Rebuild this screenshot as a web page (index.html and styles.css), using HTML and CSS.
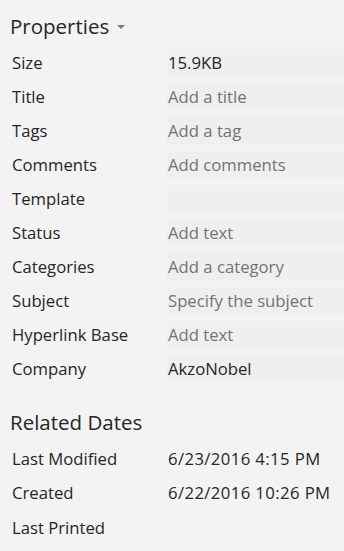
FILE: index.html
```html
<!DOCTYPE html>
<html lang="en">
<head>
    <meta charset="UTF-8">
    <title>Properties</title>
    <link rel="stylesheet" href="styles.css">
</head>
<body>

    <!-- Properties -->
    <div class="section">
        <h2 class="section-title">Properties <span class="caret"></span></h2>
        <div class="row"><span class="label">Size</span><span class="value filled">15.9KB</span></div>
        <div class="row"><span class="label">Title</span><span class="value">Add a title</span></div>
        <div class="row"><span class="label">Tags</span><span class="value">Add a tag</span></div>
        <div class="row"><span class="label">Comments</span><span class="value">Add comments</span></div>
        <div class="row"><span class="label">Template</span><span class="value"></span></div>
        <div class="row"><span class="label">Status</span><span class="value">Add text</span></div>
        <div class="row"><span class="label">Categories</span><span class="value">Add a category</span></div>
        <div class="row"><span class="label">Subject</span><span class="value">Specify the subject</span></div>
        <div class="row"><span class="label">Hyperlink Base</span><span class="value">Add text</span></div>
        <div class="row"><span class="label">Company</span><span class="value filled">AkzoNobel</span></div>
    </div>

    <!-- Related Dates -->
    <div class="section dates">
        <h2 class="section-title">Related Dates</h2>
        <div class="row"><span class="label">Last Modified</span><span class="date">6/23/2016 4:15 PM</span></div>
        <div class="row"><span class="label">Created</span><span class="date">6/22/2016 10:26 PM</span></div>
        <div class="row"><span class="label">Last Printed</span><span class="date"></span></div>
    </div>

</body>
</html>
```

FILE: styles.css
```css
body {
    margin: 0;
    padding: 0;
    background-color: #f3f3f3;
    font-family: "Open Sans", "Noto Sans", sans-serif;
    color: #262626;
    overflow: hidden;
}

.section {
    padding: 11px 0 0 10px;
}

.section-title {
    margin: 0 0 4px 0;
    font-size: 20.5px;
    font-weight: normal;
    line-height: 30px;
    display: flex;
    align-items: center;
}

/* Seta do titulo */
.caret {
    width: 0;
    height: 0;
    margin-left: 8px;
    margin-top: 2px;
    border-left: 4px solid transparent;
    border-right: 4px solid transparent;
    border-top: 4px solid #7a7a7a;
}

.row {
    display: flex;
    align-items: center;
    height: 34px;
    font-size: 16.7px;
}

.label {
    width: 155px;
    padding-left: 2px;
    flex-shrink: 0;
}

.value {
    flex: 1;
    height: 27px;
    line-height: 27px;
    background-color: #efefef;
    padding-left: 1px;
    color: #737373;
}

.value.filled {
    color: #262626;
}

.dates {
    padding-top: 22px;
}

.dates .row {
    height: 34.5px;
}

.date {
    padding-left: 1px;
    letter-spacing: 0.4px;
}
```
